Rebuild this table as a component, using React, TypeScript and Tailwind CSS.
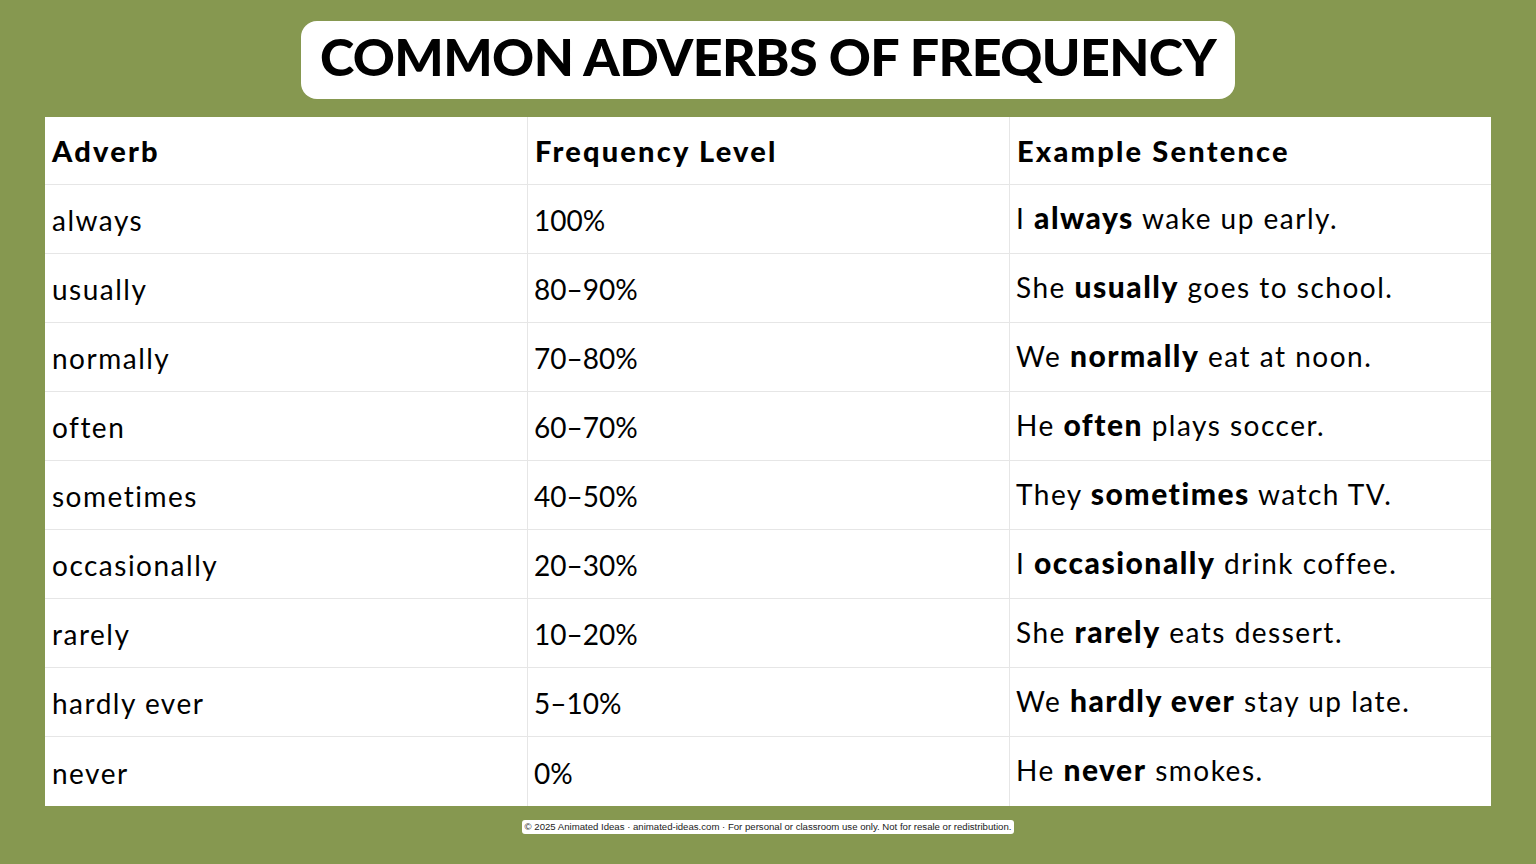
import React from 'react';

const rows = [
    { adverb: 'always', level: '100%', pre: 'I ', bold: 'always', post: ' wake up early.' },
    { adverb: 'usually', level: '80–90%', pre: 'She ', bold: 'usually', post: ' goes to school.' },
    { adverb: 'normally', level: '70–80%', pre: 'We ', bold: 'normally', post: ' eat at noon.' },
    { adverb: 'often', level: '60–70%', pre: 'He ', bold: 'often', post: ' plays soccer.' },
    { adverb: 'sometimes', level: '40–50%', pre: 'They ', bold: 'sometimes', post: ' watch TV.' },
    { adverb: 'occasionally', level: '20–30%', pre: 'I ', bold: 'occasionally', post: ' drink coffee.' },
    { adverb: 'rarely', level: '10–20%', pre: 'She ', bold: 'rarely', post: ' eats dessert.' },
    { adverb: 'hardly ever', level: '5–10%', pre: 'We ', bold: 'hardly ever', post: ' stay up late.' },
    { adverb: 'never', level: '0%', pre: 'He ', bold: 'never', post: ' smokes.' },
];

const App = () => {
    return (
        <div className="w-[1536px] h-[864px] bg-[#869850] flex flex-col items-center font-['Lato',sans-serif] text-black">
            <div className="mt-[21px] w-[934px] h-[78px] bg-white rounded-[16px] flex items-center justify-center pb-[8px]">
                <div className="text-[52px] font-black leading-none tracking-[-0.6px]">COMMON ADVERBS OF FREQUENCY</div>
            </div>
            <div className="mt-[18px] w-[1446px] bg-white grid grid-cols-3">
                {['Adverb', 'Frequency Level', 'Example Sentence'].map((h, i) => (
                    <div key={h} className={`h-[68px] flex items-center px-[7px] text-[29px] font-black tracking-[2.2px] border-b border-[#e6e6e6] ${i > 0 ? 'border-l' : ''}`}>
                        {h}
                    </div>
                ))}
                {rows.map((r, idx) => (
                    <React.Fragment key={r.adverb}>
                        <div className={`h-[69px] flex items-center px-[7px] pt-[2px] text-[28px] tracking-[1.5px] ${idx < rows.length - 1 ? 'border-b border-[#e6e6e6]' : ''}`}>{r.adverb}</div>
                        <div className={`h-[69px] flex items-center px-[6px] pt-[2px] text-[28px] border-l border-[#e6e6e6] ${idx < rows.length - 1 ? 'border-b' : ''}`}>{r.level}</div>
                        <div className={`h-[69px] flex items-center px-[6px] pb-[4px] text-[28px] tracking-[1.5px] border-l border-[#e6e6e6] ${idx < rows.length - 1 ? 'border-b' : ''}`}>
                            <span className="whitespace-pre">{r.pre}<b className="font-black text-[30px]">{r.bold}</b>{r.post}</span>
                        </div>
                    </React.Fragment>
                ))}
            </div>
            <div className="mt-[14px] bg-white rounded-[3px] px-[3px] h-[14px] flex items-center text-[9.6px] font-['Liberation_Sans',sans-serif] text-[#222]">
                © 2025 Animated Ideas · animated-ideas.com · For personal or classroom use only. Not for resale or redistribution.
            </div>
        </div>
    );
};

export default App;
